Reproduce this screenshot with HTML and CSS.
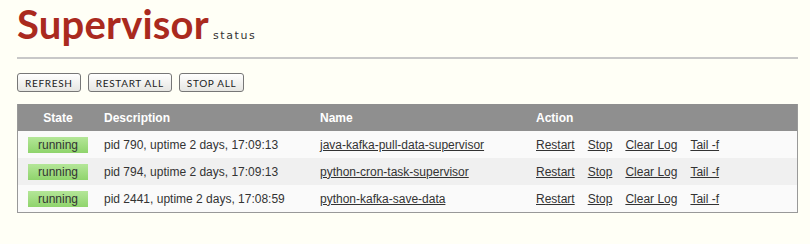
FILE: index.html
```html
<!DOCTYPE html>
<html lang="en">
<head>
  <meta charset="UTF-8">
  <title>Supervisor Status</title>
  <link rel="stylesheet" href="styles.css">
</head>
<body>
  <div class="page">
    <div class="header">
      <span class="logo">Supervisor</span><span class="sub">status</span>
    </div>

    <div class="buttons">
      <a class="button" href="#">Refresh</a>
      <a class="button" href="#">Restart All</a>
      <a class="button" href="#">Stop All</a>
    </div>

    <table class="status">
      <thead>
        <tr>
          <th class="state">State</th>
          <th class="desc">Description</th>
          <th class="name">Name</th>
          <th class="action">Action</th>
        </tr>
      </thead>
      <tbody>
        <tr>
          <td class="state"><span class="badge">running</span></td>
          <td>pid 790, uptime 2 days, 17:09:13</td>
          <td><a href="#">java-kafka-pull-data-supervisor</a></td>
          <td class="links"><a href="#">Restart</a><a href="#">Stop</a><a href="#">Clear Log</a><a href="#">Tail -f</a></td>
        </tr>
        <tr class="shade">
          <td class="state"><span class="badge">running</span></td>
          <td>pid 794, uptime 2 days, 17:09:13</td>
          <td><a href="#">python-cron-task-supervisor</a></td>
          <td class="links"><a href="#">Restart</a><a href="#">Stop</a><a href="#">Clear Log</a><a href="#">Tail -f</a></td>
        </tr>
        <tr>
          <td class="state"><span class="badge">running</span></td>
          <td>pid 2441, uptime 2 days, 17:08:59</td>
          <td><a href="#">python-kafka-save-data</a></td>
          <td class="links"><a href="#">Restart</a><a href="#">Stop</a><a href="#">Clear Log</a><a href="#">Tail -f</a></td>
        </tr>
      </tbody>
    </table>
  </div>
</body>
</html>
```

FILE: styles.css
```css
body {
  margin: 0;
  background-color: #fffff6;
  font-family: 'Liberation Sans', Arial, sans-serif;
  font-size: 12px;
  color: #333;
}

.page {
  width: 781px;
  padding: 0 17px;
}

.header {
  height: 57px;
  border-bottom: 2px solid #c8c8c8;
  display: flex;
  align-items: baseline;
}

.logo {
  font-family: 'Lato', sans-serif;
  font-weight: bold;
  font-size: 40px;
  line-height: 48px;
  letter-spacing: 0.2px;
  color: #aa2a1e;
}

.sub {
  font-family: 'DejaVu Sans', sans-serif;
  font-size: 11px;
  letter-spacing: 1.6px;
  color: #333;
  margin-left: 4px;
}

.buttons {
  display: flex;
  gap: 7px;
  margin-top: 14px;
}

.button {
  display: block;
  height: 17px;
  line-height: 18px;
  padding: 0 7px;
  border: 1px solid #777;
  border-radius: 3px;
  background: linear-gradient(#ffffff, #e6e6e2);
  font-family: 'Lato', sans-serif;
  font-weight: normal;
  font-size: 10px;
  letter-spacing: 0.7px;
  text-transform: uppercase;
  color: #222;
  text-decoration: none;
}

.status {
  width: 781px;
  margin-top: 12px;
  border-collapse: collapse;
  border: 1px solid #999;
  border-top: none;
}

.status th {
  height: 27px;
  padding: 0 0 0 6px;
  background-color: #8f8f8f;
  color: #fff;
  font-weight: bold;
  text-align: left;
}

.status th.state {
  text-align: center;
  padding: 0;
}

.status td {
  height: 27px;
  padding: 0 0 0 6px;
  background-color: #fafafa;
}

.status tr.shade td {
  background-color: #f0f0f0;
}

.status .state {
  width: 80px;
  text-align: center;
  padding: 0;
}

.status .desc, .status .name {
  width: 210px;
}

.status a {
  color: #333;
}

.links a {
  margin-right: 13px;
}

.badge {
  display: inline-block;
  width: 60px;
  height: 16px;
  line-height: 16px;
  background: linear-gradient(#b4e698, #8fd46c);
  color: #333;
  vertical-align: middle;
}
```
